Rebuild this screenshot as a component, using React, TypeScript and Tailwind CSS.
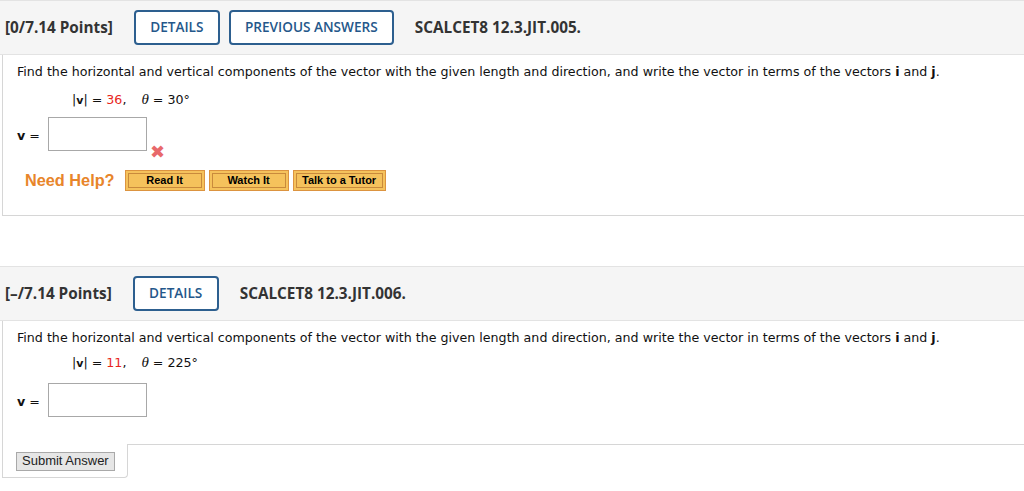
const header = "font-['Open_Sans',sans-serif]";
const body = "font-['DejaVu_Sans','Verdana',sans-serif]";

function QuestionHeader({ points, code, prev }: { points: string; code: string; prev?: boolean }) {
  return (
    <div className={`${header} flex h-[55px] items-center border-y border-[#e3e3e3] bg-[#f5f5f5] pl-[5px] text-[#333]`}>
      <span className="text-[15.3px] font-bold">{points}</span>
      <button className="ml-[21px] h-[35px] w-[86px] rounded-[4px] border-2 border-[#2d5f8f] bg-white text-[13.6px] font-semibold text-[#24578a]">
        DETAILS
      </button>
      {prev && (
        <button className="ml-[9px] h-[35px] w-[165px] rounded-[4px] border-2 border-[#2d5f8f] bg-white text-[13.6px] font-semibold text-[#24578a]">
          PREVIOUS ANSWERS
        </button>
      )}
      <span className="ml-[21px] text-[15.3px] font-bold">{code}</span>
    </div>
  );
}

function Prompt({ len, angle, pt, gap }: { len: string; angle: string; pt: string; gap: string }) {
  return (
    <>
      <p className={`${pt} text-[12.65px] leading-[16px] text-[#111]`}>
        Find the horizontal and vertical components of the vector with the given length and direction, and write the vector
        in terms of the vectors <b>i</b> and <b>j</b>.
      </p>
      <p className={`${gap} pl-[55px] text-[12.65px] leading-[16px] text-[#111]`}>
        |<b className="text-[11px]">v</b>| = <span className="text-[#e8261c]">{len}</span>,
        <span className="ml-[15px] font-['Liberation_Serif',serif] text-[15px] italic">θ</span> = {angle}°
      </p>
    </>
  );
}

function HelpButton({ label, w }: { label: string; w: string }) {
  return (
    <button
      className={`${w} h-[21px] border border-[#dc9440] bg-[#f5c25c] p-[2px] font-['Liberation_Sans',Arial,sans-serif] text-[11px] font-bold text-black`}
    >
      <span className="flex h-full w-full items-center justify-center border border-[#c98a3c]">{label}</span>
    </button>
  );
}

export default function App() {
  return (
    <div className={`min-h-[491px] w-[1024px] bg-white ${body}`}>
      <QuestionHeader points="[0/7.14 Points]" code="SCALCET8 12.3.JIT.005." prev />
      <div className="ml-[2px] h-[161px] border-b border-l border-[#d6d6d6] pl-[14px]">
        <Prompt len="36" angle="30" pt="pt-[9px]" gap="mt-[11px]" />
        <div className="mt-[8px] flex items-start">
          <span className="mt-[10px] text-[12.65px] text-[#111]">
            <b>v</b> =
          </span>
          <div className="ml-[8px] h-[34px] w-[99px] border border-[#a8a8a8]" />
          <span className="ml-[3px] mt-[27px] text-[18px] font-bold leading-[16px] text-[#e8696b]">✖</span>
        </div>
        <div className="mt-[8px] flex items-center pl-[8px]">
          <span className="font-['Liberation_Sans',Arial,sans-serif] text-[16.3px] font-bold text-[#e8852a]">Need Help?</span>
          <div className="ml-[10px] flex gap-[4px]">
            <HelpButton label="Read It" w="w-[80px]" />
            <HelpButton label="Watch It" w="w-[80px]" />
            <HelpButton label="Talk to a Tutor" w="w-[93px]" />
          </div>
        </div>
      </div>

      <div className="h-[50px]" />

      <QuestionHeader points="[–/7.14 Points]" code="SCALCET8 12.3.JIT.006." />
      <div className="ml-[2px] border-l border-[#d6d6d6]">
        <div className="h-[123px] pl-[14px]">
          <Prompt len="11" angle="225" pt="pt-[9px]" gap="mt-[8px]" />
          <div className="mt-[11px] flex items-start">
            <span className="mt-[10px] text-[12.65px] text-[#111]">
              <b>v</b> =
            </span>
            <div className="ml-[8px] h-[34px] w-[99px] border border-[#a8a8a8]" />
          </div>
        </div>
        <div className="flex">
          <div className="h-[34px] w-[125px] rounded-br-[4px] border-b border-r border-[#d6d6d6] pl-[13px] pt-[4px]">
            <button className="h-[19px] border border-[#a9a9a9] bg-[#e6e6e6] px-[5px] font-['Liberation_Sans',Arial,sans-serif] text-[13px] leading-[16px] text-[#222]">
              Submit Answer
            </button>
          </div>
          <div className="flex-1 border-t border-[#d6d6d6]" />
        </div>
      </div>
    </div>
  );
}
